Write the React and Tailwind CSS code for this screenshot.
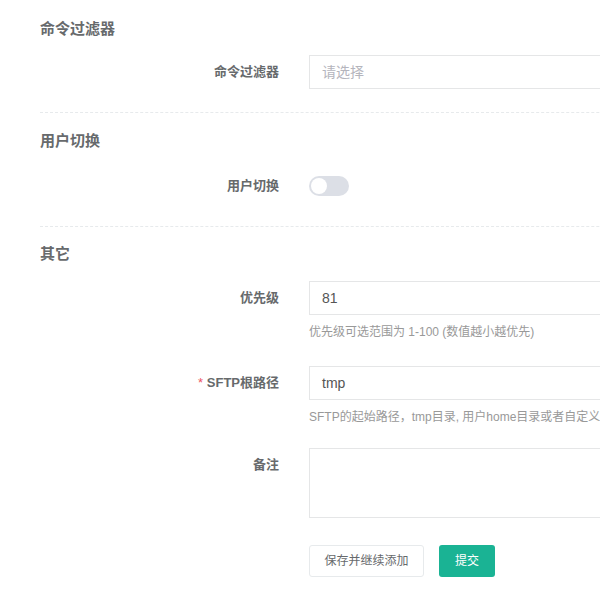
import React from "react";

const font = { fontFamily: '"Liberation Sans", "Noto Sans CJK SC", sans-serif' };

function Label({ children, center }) {
  return (
    <div
      className={`w-[239px] shrink-0 text-right text-[13px] font-bold text-[#676a6c] leading-[20px] ${center ? "" : "pt-[7px]"}`}
    >
      {children}
    </div>
  );
}

function Heading({ children, className = "" }) {
  return (
    <div className={`text-[15px] font-bold text-[#676a6c] leading-[21px] ${className}`}>{children}</div>
  );
}

function Divider({ className = "" }) {
  return <div className={`border-t border-dashed border-[#e7eaec] ${className}`} />;
}

export default function App() {
  return (
    <div className="w-[600px] h-[610px] overflow-hidden bg-white" style={font}>
      <div className="pl-[40px] pt-[18px] w-[900px]">
        <Heading>命令过滤器</Heading>
        <div className="flex mt-[16px] gap-[30px]">
          <Label>命令过滤器</Label>
          <div className="w-[400px] h-[34px] border border-[#e5e6e7] pl-[12px] flex items-center text-[14px] text-[#b5b5bd]">
            请选择
          </div>
        </div>
        <Divider className="mt-[23px]" />

        <Heading className="mt-[17px]">用户切换</Heading>
        <div className="flex mt-[18px] gap-[30px] h-[34px] items-center">
          <Label center>用户切换</Label>
          <div className="w-[40px] h-[20px] rounded-full bg-[#dcdfe6] p-[2px] flex items-center">
            <div className="w-[16px] h-[16px] rounded-full bg-white" />
          </div>
        </div>
        <Divider className="mt-[23px]" />

        <Heading className="mt-[16px]">其它</Heading>
        <div className="flex mt-[17px] gap-[30px]">
          <Label>优先级</Label>
          <div className="w-[400px]">
            <div className="h-[34px] border border-[#e5e6e7] pl-[12px] flex items-center text-[14px] text-[#555]">
              81
            </div>
            <div className="mt-[9px] text-[12px] leading-[17px] text-[#999] whitespace-nowrap">
              优先级可选范围为 1-100 (数值越小越优先)
            </div>
          </div>
        </div>

        <div className="flex mt-[25px] gap-[30px]">
          <Label>
            <span className="text-[#ed5565] font-normal">*</span> SFTP根路径
          </Label>
          <div className="w-[400px]">
            <div className="h-[34px] border border-[#e5e6e7] pl-[12px] flex items-center text-[14px] text-[#555]">
              tmp
            </div>
            <div className="mt-[9px] text-[12px] leading-[17px] text-[#999] whitespace-nowrap">
              SFTP的起始路径，tmp目录, 用户home目录或者自定义路径
            </div>
          </div>
        </div>

        <div className="flex mt-[22px] gap-[30px]">
          <Label>备注</Label>
          <div className="w-[400px] h-[70px] border border-[#e5e6e7]" />
        </div>

        <div className="flex mt-[27px] gap-[30px]">
          <div className="w-[239px] shrink-0" />
          <div className="flex gap-[15px]">
            <button className="h-[32px] w-[115px] border border-[#e7eaec] rounded-[3px] bg-white text-[12px] text-[#676a6c]">
              保存并继续添加
            </button>
            <button className="h-[32px] w-[56px] rounded-[3px] bg-[#1ab394] text-[12px] text-white">
              提交
            </button>
          </div>
        </div>
      </div>
    </div>
  );
}
